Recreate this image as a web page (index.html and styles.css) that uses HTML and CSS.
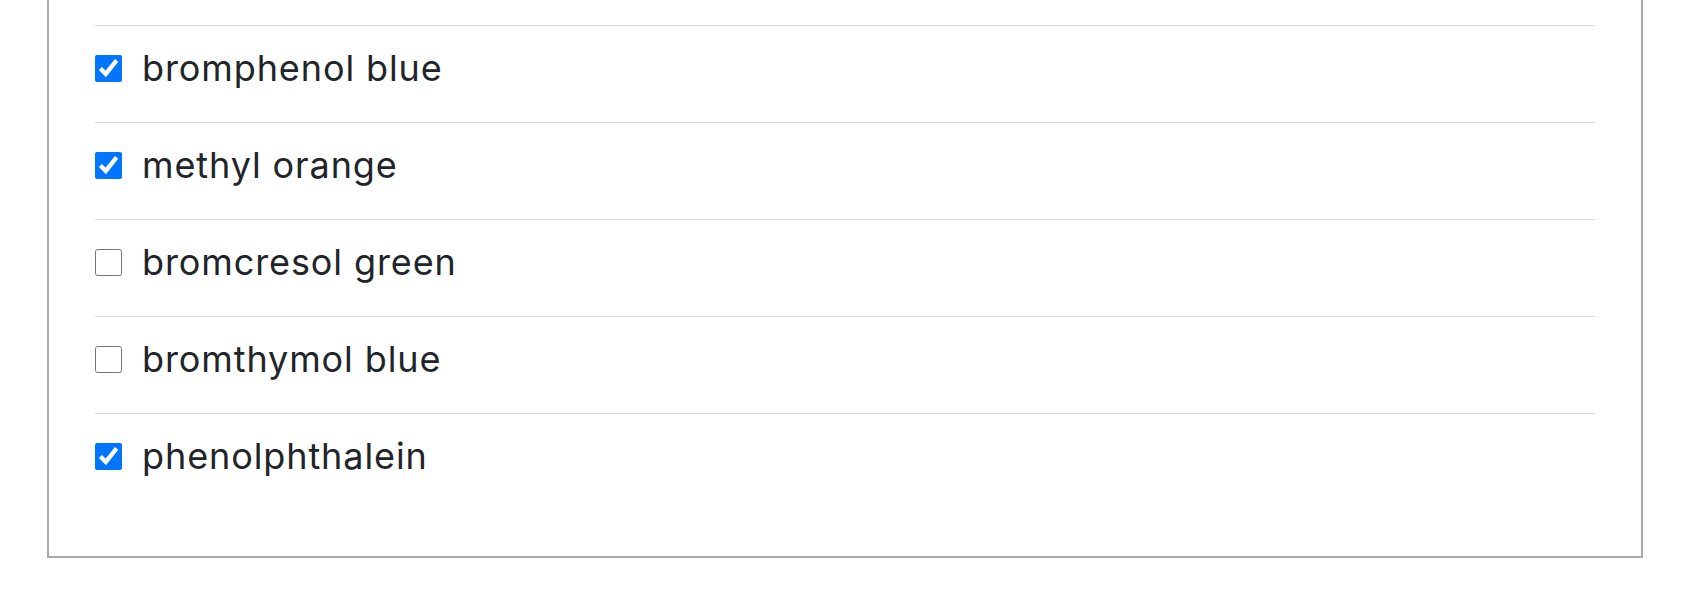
FILE: index.html
```html
<!DOCTYPE html>
<html lang="en">
<head>
<meta charset="utf-8">
<title>Indicators</title>
<link rel="stylesheet" href="styles.css">
</head>
<body>
  <div class="panel">
    <ul class="list">
      <li class="item"><label class="opt"><input type="checkbox" class="box" checked><span class="name">bromphenol blue</span></label></li>
      <li class="item"><label class="opt"><input type="checkbox" class="box" checked><span class="name">methyl orange</span></label></li>
      <li class="item"><label class="opt"><input type="checkbox" class="box"><span class="name">bromcresol green</span></label></li>
      <li class="item"><label class="opt"><input type="checkbox" class="box"><span class="name">bromthymol blue</span></label></li>
      <li class="item"><label class="opt"><input type="checkbox" class="box" checked><span class="name">phenolphthalein</span></label></li>
    </ul>
  </div>
</body>
</html>
```

FILE: styles.css
```css
html, body {
  margin: 0;
  padding: 0;
  background: #ffffff;
}

body {
  font-family: "Inter", "Lato", sans-serif;
  color: #212529;
}

.panel {
  margin: 0 44px 0 47px;
  border: 2px solid #a9a9a9;
  border-top: 0;
  padding: 24.7px 46px 46.4px;
}

.list {
  list-style: none;
  margin: 0;
  padding: 0;
}

.item {
  border-top: 1.33px solid #dcdcdc;
  height: 86px;
  padding-bottom: 10px;
  display: flex;
  align-items: center;
}

.opt {
  display: flex;
  align-items: center;
  gap: 20px;
}

.box {
  width: 27px;
  height: 27px;
  margin: 0;
  accent-color: #0075ff;
}

.name {
  font-size: 36px;
  letter-spacing: 0.9px;
  line-height: 1.2;
}
```
